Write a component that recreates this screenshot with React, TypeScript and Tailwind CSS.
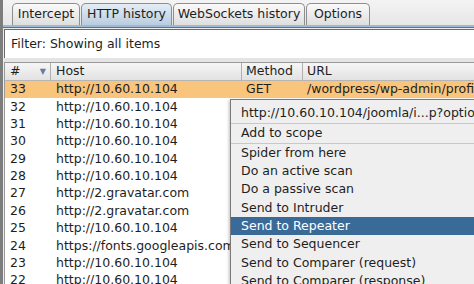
const rows = [
  { id: "33", host: "http://10.60.10.104", method: "GET", url: "/wordpress/wp-admin/profile.php" },
  { id: "32", host: "http://10.60.10.104", method: "", url: "" },
  { id: "31", host: "http://10.60.10.104", method: "", url: "" },
  { id: "30", host: "http://10.60.10.104", method: "", url: "" },
  { id: "29", host: "http://10.60.10.104", method: "", url: "" },
  { id: "28", host: "http://10.60.10.104", method: "", url: "" },
  { id: "27", host: "http://2.gravatar.com", method: "", url: "" },
  { id: "26", host: "http://2.gravatar.com", method: "", url: "" },
  { id: "25", host: "http://10.60.10.104", method: "", url: "" },
  { id: "24", host: "https://fonts.googleapis.com", method: "", url: "" },
  { id: "23", host: "http://10.60.10.104", method: "", url: "" },
  { id: "22", host: "http://10.60.10.104", method: "", url: "" },
];

const tabs = [
  { label: "Intercept", w: "w-[68px]" },
  { label: "HTTP history", w: "w-[91px]", active: true },
  { label: "WebSockets history", w: "w-[132px]" },
  { label: "Options", w: "w-[64px]" },
];

const menuItems = [
  "Spider from here",
  "Do an active scan",
  "Do a passive scan",
  "Send to Intruder",
  "Send to Repeater",
  "Send to Sequencer",
  "Send to Comparer (request)",
  "Send to Comparer (response)",
];

export default function App() {
  return (
    <div className="relative flex h-[284px] w-[474px] overflow-hidden bg-[#ececec] text-[12.5px] text-[#1e1e1e] [font-family:'DejaVu_Sans',sans-serif]">
      <div className="w-[3px] shrink-0 bg-[#7d7d7d]" />
      <div className="flex min-w-0 flex-1 flex-col">
        {/* tabs */}
        <div className="flex h-[25px] shrink-0 items-end gap-px bg-gradient-to-b from-[#f4f4f4] to-[#e6e6e6] pl-[9px]">
          {tabs.map((t) => (
            <div
              key={t.label}
              className={`${t.w} flex h-[22px] items-center justify-center rounded-t-[5px] border border-b-0 border-[#8e8e8e] ${
                t.active ? "bg-gradient-to-b from-[#e4edf5] to-[#b9cde0]" : "bg-gradient-to-b from-[#fafafa] to-[#dedede]"
              }`}
            >
              {t.label}
            </div>
          ))}
        </div>
        <div className="h-[2px] shrink-0 bg-[#9db9d4]" />
        <div className="h-px shrink-0 bg-[#6f6f6f]" />
        <div className="flex min-h-0 flex-1 flex-col pl-px pt-px">
          {/* filter */}
          <div className="flex h-[29px] shrink-0 items-center border-l border-t border-[#6a6a6a] bg-white pl-[6px]">
            Filter: Showing all items
          </div>
          <div className="h-[4px] shrink-0 bg-[#e4e4e4]" />
          {/* table */}
          <div className="flex min-h-0 flex-1 flex-col overflow-hidden border-l border-t border-[#9a9a9a] bg-white">
            <div className="flex h-[18px] shrink-0 items-center border-b border-[#b5b5b5] bg-gradient-to-b from-[#f6f6f6] to-[#e2e2e2]">
              <div className="flex w-[46px] items-center justify-between border-r border-[#b0b0b0] pl-[5px] pr-[4px]">
                <span>#</span>
                <span className="text-[8px] text-[#5f7f9f]">▼</span>
              </div>
              <div className="w-[191px] border-r border-[#b0b0b0] pl-[5px]">Host</div>
              <div className="w-[61px] border-r border-[#b0b0b0] pl-[4px]">Method</div>
              <div className="pl-[4px]">URL</div>
            </div>
            {rows.map((r, i) => (
              <div
                key={r.id}
                className={`flex h-[17.36px] shrink-0 items-center whitespace-nowrap ${i === 0 ? "bg-[#f9c47b]" : ""}`}
              >
                <div className="w-[46px] shrink-0 pl-[5px]">{r.id}</div>
                <div className="w-[191px] shrink-0 overflow-hidden pl-[5px]">{r.host}</div>
                <div className="w-[61px] shrink-0 pl-[4px]">{r.method}</div>
                <div className="overflow-hidden pl-[4px]">{r.url}</div>
              </div>
            ))}
          </div>
        </div>
      </div>

      {/* context menu */}
      <div className="absolute bottom-0 left-[230px] right-0 top-[99px] flex flex-col border-l border-t border-[#7a7a7a] bg-[#efefef] pt-[4px] shadow-[-1px_1px_3px_rgba(0,0,0,0.25)]">
        <div className="flex h-[18px] shrink-0 items-center whitespace-nowrap pl-[10px]">http://10.60.10.104/joomla/i...p?option=com</div>
        <div className="mt-px h-px shrink-0 bg-[#c8c8c8]" />
        <div className="flex h-[18px] shrink-0 items-center pl-[10px]">Add to scope</div>
        <div className="mt-px h-px shrink-0 bg-[#c8c8c8]" />
        {menuItems.map((m) => (
          <div
            key={m}
            className={`flex h-[18.3px] shrink-0 items-center whitespace-nowrap pl-[10px] ${
              m === "Send to Repeater" ? "bg-[#3a6b98] text-white" : ""
            }`}
          >
            {m}
          </div>
        ))}
      </div>
    </div>
  );
}
